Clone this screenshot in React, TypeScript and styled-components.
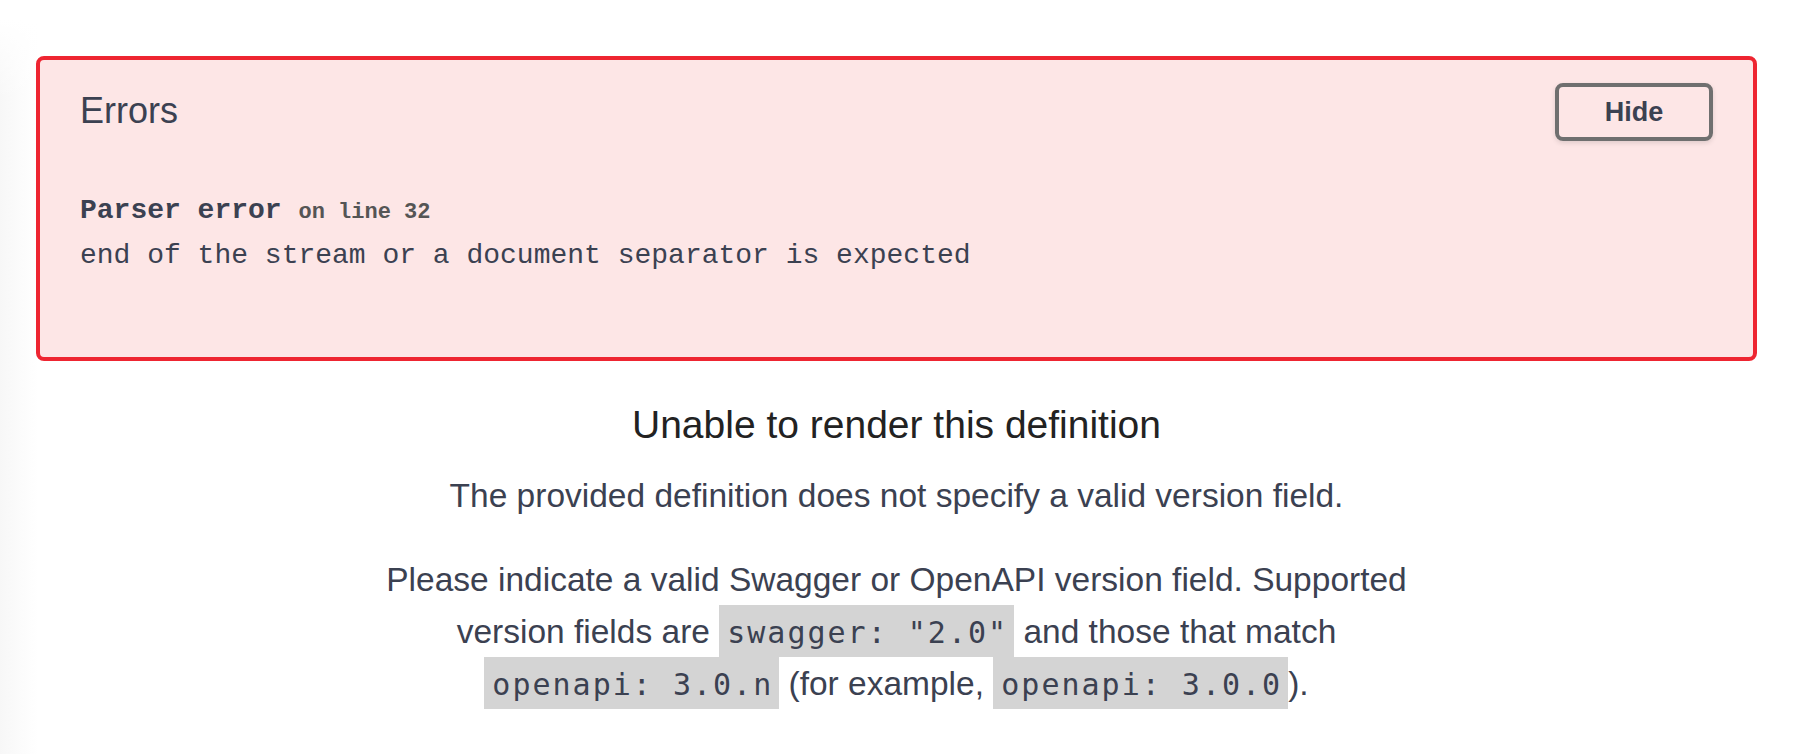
import React from "react";
import styled, { createGlobalStyle } from "styled-components";

const GlobalStyle = createGlobalStyle`
  html, body {
    margin: 0;
    padding: 0;
  }
  body {
    font-family: "Liberation Sans", Arial, sans-serif;
    color: #3b4151;
    background:
      linear-gradient(to bottom, #ffffff 20px, rgba(255,255,255,0) 100px),
      linear-gradient(to right, #f7f7f7 0px, #fbfbfb 18px, #ffffff 38px);
    background-color: #ffffff;
    min-height: 754px;
  }
`;

const Page = styled.div`
  padding: 56px 39px 46px 36px;
  box-sizing: border-box;
`;

const ErrorBox = styled.section`
  box-sizing: border-box;
  border: 4px solid #ee2531;
  border-radius: 8px;
  background: #fde6e6;
  padding: 23px 40px 80px 40px;
`;

const Header = styled.div`
  display: flex;
  justify-content: space-between;
  align-items: center;
`;

const Title = styled.h4`
  margin: 0;
  font-family: "Liberation Sans", Arial, sans-serif;
  font-weight: 400;
  font-size: 36px;
  line-height: 36px;
  color: #3b4151;
  transform: translateY(-1px);
`;

const HideButton = styled.button`
  box-sizing: border-box;
  width: 158px;
  height: 58px;
  border: 4px solid #6f6f6f;
  border-radius: 8px;
  background: transparent;
  box-shadow: 0 2px 5px rgba(0, 0, 0, 0.12);
  font-family: "Liberation Sans", Arial, sans-serif;
  font-weight: 700;
  font-size: 27px;
  color: #3b4151;
  cursor: pointer;
  padding: 0;
`;

const ErrorEntry = styled.div`
  margin-top: 48px;
  font-family: "Liberation Mono", "Courier New", monospace;
  line-height: 43px;
`;

const ErrorHead = styled.h4`
  margin: 0;
  font-size: 28px;
  font-weight: 700;
  color: #3b4151;
`;

const Location = styled.small`
  font-size: 22px;
  font-weight: 700;
  color: #555555;
`;

const Message = styled.div`
  font-size: 28px;
  color: #3b4151;
  white-space: pre-line;
`;

const Info = styled.div`
  text-align: center;
  margin-top: 41px;
`;

const Heading = styled.h2`
  margin: 0;
  font-family: "Liberation Sans", Arial, sans-serif;
  font-weight: 400;
  font-size: 39px;
  line-height: 46px;
  color: #222222;
`;

const Para = styled.p<{ $gap: number }>`
  margin: ${(p) => p.$gap}px auto 0;
  max-width: 1080px;
  font-size: 33.5px;
  line-height: 52px;
  color: #3b4151;
`;

const Code = styled.code`
  font-family: "DejaVu Sans Mono", "Liberation Mono", monospace;
  font-size: 30px;
  letter-spacing: 2px;
  line-height: 1;
  white-space: nowrap;
  background: #d4d4d4;
  padding: 10px 6px 7px 8px;
  color: #3b4151;
`;

export default function App() {
  return (
    <>
      <GlobalStyle />
      <Page>
        <ErrorBox>
          <Header>
            <Title>Errors</Title>
            <HideButton>Hide</HideButton>
          </Header>
          <ErrorEntry>
            <ErrorHead>
              Parser error <Location>on line 32</Location>
            </ErrorHead>
            <Message>end of the stream or a document separator is expected</Message>
          </ErrorEntry>
        </ErrorBox>
        <Info>
          <Heading>Unable to render this definition</Heading>
          <Para $gap={22}>The provided definition does not specify a valid version field.</Para>
          <Para $gap={32}>
            Please indicate a valid Swagger or OpenAPI version field. Supported version fields are{" "}
            <Code>swagger: "2.0"</Code> and those that match <Code>openapi: 3.0.n</Code> (for example,{" "}
            <Code>openapi: 3.0.0</Code>).
          </Para>
        </Info>
      </Page>
    </>
  );
}
